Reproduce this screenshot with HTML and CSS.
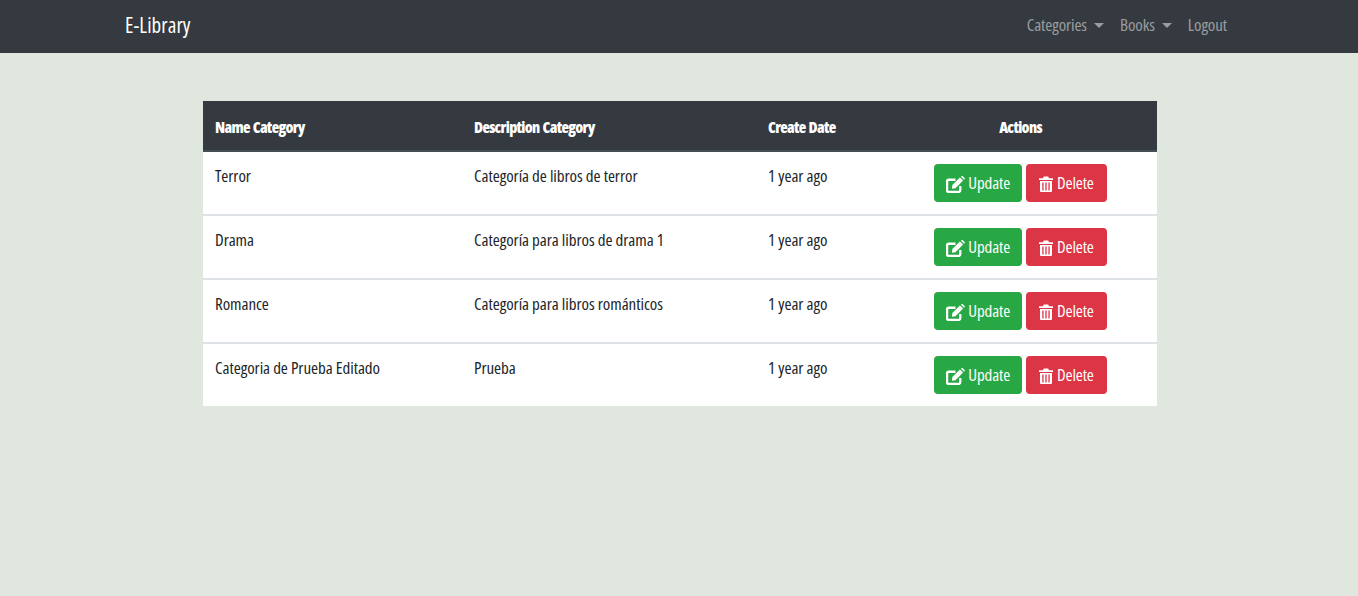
FILE: index.html
```html
<!DOCTYPE html>
<html lang="en">
<head>
  <meta charset="UTF-8" />
  <meta name="viewport" content="width=device-width, initial-scale=1.0"/>
  <title>E-Library</title>
  <link rel="stylesheet" href="styles.css">
</head>
<body>
  <nav class="navbar">
    <a class="brand" href="#">E-Library</a>
    <ul class="nav-links">
      <li><a class="dropdown" href="#">Categories</a></li>
      <li><a class="dropdown" href="#">Books</a></li>
      <li><a href="#">Logout</a></li>
    </ul>
  </nav>

  <main class="content">
    <table class="table">
      <thead>
        <tr>
          <th class="col-name">Name Category</th>
          <th class="col-desc">Description Category</th>
          <th class="col-date">Create Date</th>
          <th class="col-actions">Actions</th>
        </tr>
      </thead>
      <tbody>
        <tr>
          <td>Terror</td>
          <td>Categoría de libros de terror</td>
          <td>1 year ago</td>
          <td class="actions">
            <a class="btn btn-success" href="#"><svg class="icon" viewBox="0 0 18 16"><path class="box" d="M13.5 9.5v4a1.5 1.5 0 0 1-1.5 1.5H2.5A1.5 1.5 0 0 1 1 13.500V5a1.500 1.500 0 0 1 1.500-1.500H9"/><path d="M6 8.500 13.200 1.300l3 3L9 11.500l-3.400.5zM14 .5l.7-.4a1 1 0 0 1 1.200.1l1.600 1.600a1 1 0 0 1 .1 1.200l-.5.600z"/></svg>Update</a>
            <a class="btn btn-danger" href="#"><svg class="icon trash" viewBox="0 0 14 16"><path d="M4 2.200 4.800.5h4.400l.8 1.700h4V4H0V2.200zM1 5h12v10a1 1 0 0 1-1 1H2a1 1 0 0 1-1-1zM3.300 6.500v8h1.300v-8zm3.050 0v8h1.300v-8zm3.050 0v8h1.300v-8z"/></svg>Delete</a>
          </td>
        </tr>
        <tr>
          <td>Drama</td>
          <td>Categoría para libros de drama 1</td>
          <td>1 year ago</td>
          <td class="actions">
            <a class="btn btn-success" href="#"><svg class="icon" viewBox="0 0 18 16"><path class="box" d="M13.5 9.5v4a1.5 1.5 0 0 1-1.5 1.5H2.5A1.5 1.5 0 0 1 1 13.500V5a1.500 1.500 0 0 1 1.500-1.500H9"/><path d="M6 8.500 13.200 1.300l3 3L9 11.500l-3.400.5zM14 .5l.7-.4a1 1 0 0 1 1.200.1l1.600 1.600a1 1 0 0 1 .1 1.200l-.5.600z"/></svg>Update</a>
            <a class="btn btn-danger" href="#"><svg class="icon trash" viewBox="0 0 14 16"><path d="M4 2.200 4.800.5h4.400l.8 1.700h4V4H0V2.200zM1 5h12v10a1 1 0 0 1-1 1H2a1 1 0 0 1-1-1zM3.300 6.500v8h1.300v-8zm3.050 0v8h1.300v-8zm3.050 0v8h1.300v-8z"/></svg>Delete</a>
          </td>
        </tr>
        <tr>
          <td>Romance</td>
          <td>Categoría para libros románticos</td>
          <td>1 year ago</td>
          <td class="actions">
            <a class="btn btn-success" href="#"><svg class="icon" viewBox="0 0 18 16"><path class="box" d="M13.5 9.5v4a1.5 1.5 0 0 1-1.5 1.5H2.5A1.5 1.5 0 0 1 1 13.500V5a1.500 1.500 0 0 1 1.500-1.500H9"/><path d="M6 8.500 13.200 1.300l3 3L9 11.500l-3.400.5zM14 .5l.7-.4a1 1 0 0 1 1.200.1l1.600 1.600a1 1 0 0 1 .1 1.200l-.5.600z"/></svg>Update</a>
            <a class="btn btn-danger" href="#"><svg class="icon trash" viewBox="0 0 14 16"><path d="M4 2.200 4.800.5h4.400l.8 1.700h4V4H0V2.200zM1 5h12v10a1 1 0 0 1-1 1H2a1 1 0 0 1-1-1zM3.300 6.500v8h1.300v-8zm3.050 0v8h1.300v-8zm3.050 0v8h1.300v-8z"/></svg>Delete</a>
          </td>
        </tr>
        <tr>
          <td>Categoria de Prueba Editado</td>
          <td>Prueba</td>
          <td>1 year ago</td>
          <td class="actions">
            <a class="btn btn-success" href="#"><svg class="icon" viewBox="0 0 18 16"><path class="box" d="M13.5 9.5v4a1.5 1.5 0 0 1-1.5 1.5H2.5A1.5 1.5 0 0 1 1 13.500V5a1.500 1.500 0 0 1 1.500-1.500H9"/><path d="M6 8.500 13.200 1.300l3 3L9 11.500l-3.400.5zM14 .5l.7-.4a1 1 0 0 1 1.200.1l1.600 1.600a1 1 0 0 1 .1 1.200l-.5.600z"/></svg>Update</a>
            <a class="btn btn-danger" href="#"><svg class="icon trash" viewBox="0 0 14 16"><path d="M4 2.200 4.800.5h4.400l.8 1.700h4V4H0V2.200zM1 5h12v10a1 1 0 0 1-1 1H2a1 1 0 0 1-1-1zM3.300 6.500v8h1.300v-8zm3.050 0v8h1.300v-8zm3.050 0v8h1.300v-8z"/></svg>Delete</a>
          </td>
        </tr>
      </tbody>
    </table>
  </main>
</body>
</html>
```
FILE: styles.css
```css
body {
  margin: 0;
  min-height: 100vh;
  background: #e0e7de;
  font-family: "Open Sans", sans-serif;
  font-stretch: 75%;
  font-size: 17px;
  letter-spacing: -0.05px;
  line-height: 24px;
  color: #212529;
}

a {
  text-decoration: none;
}

.navbar {
  height: 53px;
  box-sizing: border-box;
  padding: 0 131px 4px 125px;
  background: #343a40;
  display: flex;
  justify-content: space-between;
  align-items: center;
}

.brand {
  color: #fff;
  font-size: 21px;
  letter-spacing: 0.1px;
}

.nav-links {
  display: flex;
  gap: 16px;
  list-style: none;
  margin: 0;
  padding: 0;
}

.nav-links a {
  color: rgba(255,255,255,0.5);
  letter-spacing: -0.1px;
}

.dropdown::after {
  content: "";
  display: inline-block;
  margin-left: 7px;
  vertical-align: 3px;
  border-top: 5px solid;
  border-left: 5px solid transparent;
  border-right: 5px solid transparent;
}

.content {
  padding: 48px 0 0 2px;
  display: flex;
  justify-content: center;
}

.table {
  width: 954px;
  table-layout: fixed;
  border-collapse: separate;
  border-spacing: 0;
  background: #fff;
}

.table th {
  height: 47px;
  padding: 2px 12px 0;
  background: #343a40;
  color: #fff;
  font-size: 15.5px;
  font-weight: 800;
  letter-spacing: -0.7px;
  word-spacing: 1px;
  text-align: left;
  border-bottom: 2px solid #454d55;
}

.table th.col-actions {
  text-align: center;
}

.col-name { width: 235px; }
.col-desc { width: 270px; }
.col-date { width: 104px; }

.table td {
  padding: 12px;
  vertical-align: top;
}

.table tbody tr + tr td {
  border-top: 2px solid #dee2e6;
}

.table td.actions {
  text-align: center;
  white-space: nowrap;
  font-size: 0;
}

.btn {
  display: inline-flex;
  vertical-align: top;
  align-items: center;
  height: 38px;
  box-sizing: border-box;
  padding: 0 12px;
  border-radius: 4px;
  color: #fff;
  font-size: 17px;
  font-weight: 500;
  letter-spacing: -0.15px;
}

.btn + .btn {
  margin-left: 4px;
}

.btn-success { background: #28a745; }
.btn-danger {
  background: #dc3545;
  padding: 0 13px;
}

.icon {
  width: 19px;
  height: 17px;
  margin: 2px 3px 0 0;
  fill: #fff;
}

.icon .box {
  fill: none;
  stroke: #fff;
  stroke-width: 2.2;
}

.icon.trash {
  width: 14px;
  height: 16px;
  margin-right: 4px;
}
```
